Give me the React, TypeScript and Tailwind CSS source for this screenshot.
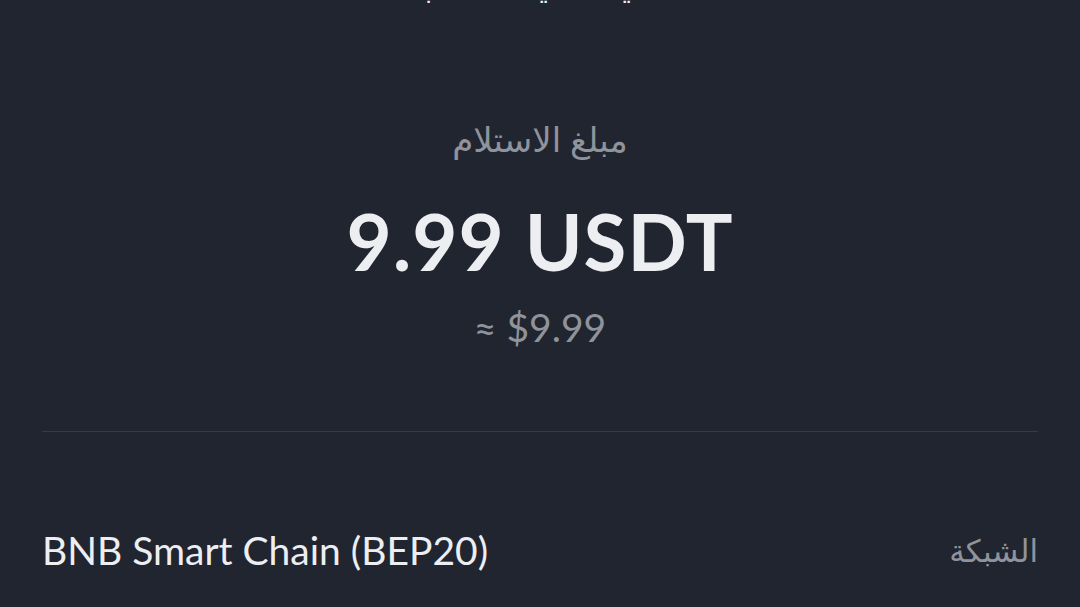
export default function App() {
  return (
    <div
      className="h-[607px] w-[1080px] overflow-hidden bg-[#21252f] px-[42px]"
      style={{ fontFamily: "Lato, 'Noto Sans', 'DejaVu Sans', sans-serif" }}
    >
      <div className="-mt-[34px] text-center text-[32px] leading-[40px] text-[#eceef2]" dir="rtl">
        تأكيد عملية السحب
      </div>

      <div className="flex flex-col items-center pt-[113px]">
        <div className="text-[34px] leading-[40px] text-[#8f939c]" dir="rtl">
          مبلغ الاستلام
        </div>
        <div className="mt-[42px] text-[78px] font-bold leading-[80px] tracking-[1px] text-[#eceef2]">
          9.99 USDT
        </div>
        <div className="mt-[22px] text-[39px] leading-[48px] text-[#8f939c]">≈ $9.99</div>
      </div>

      <div className="mt-[80px] h-px bg-[#363b47]" />

      <div className="mt-[96px] flex items-center justify-between">
        <div className="text-[39px] leading-[44px] text-[#eceef2]">BNB Smart Chain (BEP20)</div>
        <div className="text-[31px] leading-[44px] text-[#8f939c]" dir="rtl">
          الشبكة
        </div>
      </div>
    </div>
  );
}
